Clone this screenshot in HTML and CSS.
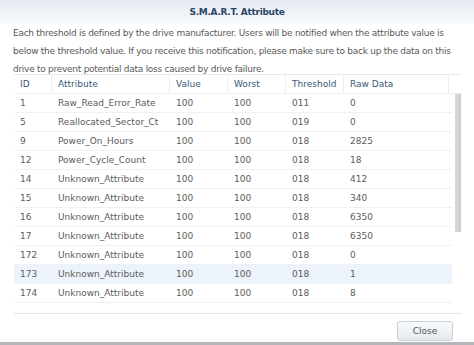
FILE: index.html
```html
<!DOCTYPE html>
<html lang="en">
<head>
  <meta charset="UTF-8">
  <title>S.M.A.R.T. Attribute</title>
  <link rel="stylesheet" href="styles.css">
</head>
<body>
  <div class="dialog">
    <div class="dialog-title">S.M.A.R.T. Attribute</div>

    <div class="dialog-body">
      <p class="desc">Each threshold is defined by the drive manufacturer. Users will be notified when the attribute value is below the threshold value. If you receive this notification, please make sure to back up the data on this drive to prevent potential data loss caused by drive failure.</p>

      <div class="grid">
        <div class="grid-head">
          <div class="cell c-id">ID</div>
          <div class="cell c-attr">Attribute</div>
          <div class="cell c-num">Value</div>
          <div class="cell c-num">Worst</div>
          <div class="cell c-num">Threshold</div>
          <div class="cell c-raw">Raw Data</div>
          <div class="cell c-pad"></div>
        </div>

        <div class="grid-scroll">
          <div class="grid-rows" id="rows"></div>
          <div class="scrollbar"><div class="thumb"></div></div>
        </div>
      </div>
    </div>

    <div class="dialog-foot">
      <button type="button" class="close-btn">Close</button>
    </div>
  </div>

  <script>
    const data = [
      [1, 'Raw_Read_Error_Rate', '100', '100', '011', '0'],
      [5, 'Reallocated_Sector_Ct', '100', '100', '019', '0'],
      [9, 'Power_On_Hours', '100', '100', '018', '2825'],
      [12, 'Power_Cycle_Count', '100', '100', '018', '18'],
      [14, 'Unknown_Attribute', '100', '100', '018', '412'],
      [15, 'Unknown_Attribute', '100', '100', '018', '340'],
      [16, 'Unknown_Attribute', '100', '100', '018', '6350'],
      [17, 'Unknown_Attribute', '100', '100', '018', '6350'],
      [172, 'Unknown_Attribute', '100', '100', '018', '0'],
      [173, 'Unknown_Attribute', '100', '100', '018', '1'],
      [174, 'Unknown_Attribute', '100', '100', '018', '8']
    ];

    const rows = document.getElementById('rows');
    const classes = ['c-id', 'c-attr', 'c-num', 'c-num', 'c-num', 'c-raw'];

    data.forEach(function(r) {
      const row = document.createElement('div');
      row.className = 'row' + (r[0] === 173 ? ' selected' : '');
      r.forEach(function(v, i) {
        const cell = document.createElement('div');
        cell.className = 'cell ' + classes[i];
        cell.textContent = v;
        row.appendChild(cell);
      });
      rows.appendChild(row);
    });
  </script>
</body>
</html>
```

FILE: styles.css
```css
body {
  margin: 0;
  padding: 0;
  background-color: #fff;
  font-family: 'DejaVu Sans', Verdana, sans-serif;
  font-size: 9px;
  color: #5c5c5c;
}

.dialog {
  width: 474px;
  height: 345px;
  display: flex;
  flex-direction: column;
  background-color: #fff;
  border-bottom: 3px solid #b4b6b9;
  box-sizing: border-box;
}

.dialog-title {
  height: 24px;
  line-height: 25px;
  text-align: center;
  font-weight: bold;
  letter-spacing: -0.3px;
  color: #2b4466;
  background: linear-gradient(#e6ebf2, #f8fafc);
}

.dialog-body {
  padding: 0 12px 0 14px;
}

.desc {
  margin: 0 0 -4px -1px;
  line-height: 18px;
  letter-spacing: -0.27px;
  color: #5a5a5a;
}

.grid {
  border-top: 1px solid #e6e9ed;
}

.grid-head {
  display: flex;
  height: 18px;
  line-height: 18px;
  color: #3b5878;
  border-bottom: 1px solid #eceff2;
}

.grid-head .cell {
  border-right: 1px solid #eceff2;
}

.grid-head .c-pad {
  border-right: none;
}

.cell {
  box-sizing: border-box;
  padding-left: 6px;
  white-space: nowrap;
  overflow: hidden;
}

.c-id { width: 38px; }
.c-attr { width: 118px; }
.c-num { width: 58px; }
.c-raw { width: 105px; }
.c-pad { width: 13px; }

.grid-scroll {
  display: flex;
  height: 219px;
  border-bottom: 1px solid #e3e6ea;
}

.grid-rows {
  width: 438px;
}

.row {
  display: flex;
  height: 19px;
  line-height: 19px;
  border-bottom: 1px solid #f0f1f3;
  box-sizing: border-box;
}

.row.selected {
  background-color: #edf3fb;
}

.scrollbar {
  width: 10px;
  padding-left: 3px;
  box-sizing: border-box;
}

.thumb {
  width: 6px;
  height: 138px;
  background: linear-gradient(90deg, #d8dadc, #cbcdd0);
}

.dialog-foot {
  display: flex;
  justify-content: flex-end;
  padding: 7px 21px 0 0;
}

.close-btn {
  width: 56px;
  height: 20px;
  font-family: 'DejaVu Sans', Verdana, sans-serif;
  font-size: 9px;
  color: #555;
  background: linear-gradient(#f9fbfd, #e4e9ef);
  border: 1px solid #c8d0da;
  border-radius: 3px;
  padding: 0;
}
```
